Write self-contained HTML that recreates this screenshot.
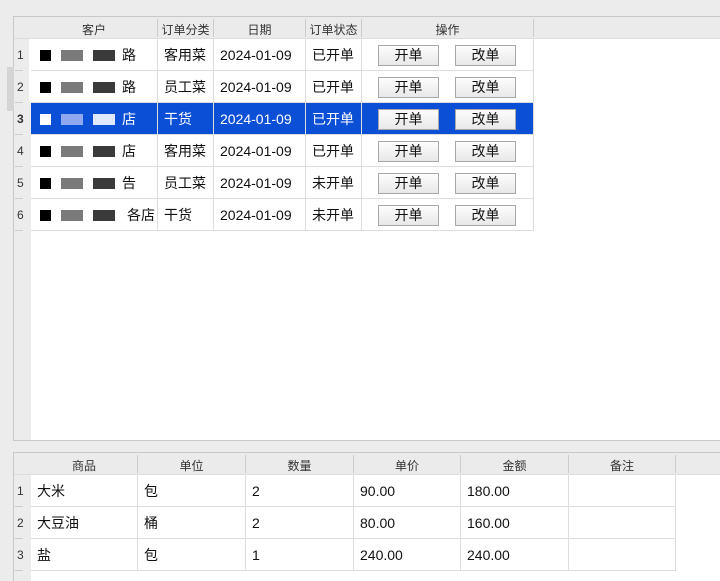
<!DOCTYPE html><html><head><meta charset="utf-8"><style>
*{margin:0;padding:0;box-sizing:border-box}
body{width:720px;height:581px;background:#ececec;position:relative;overflow:hidden;font-family:"Liberation Sans","Noto Sans CJK SC",sans-serif;color:#111}
.a{position:absolute}
.hd{position:absolute;font-size:12px;color:#333;text-align:center;line-height:22px;border-right:1px solid #ccc;height:18px;top:2px}
.c{position:absolute;font-size:14px;line-height:32px;height:32px;border-right:1px solid #ddd;border-bottom:1px solid #ddd;padding-left:6px;white-space:nowrap}
.btn{position:absolute;width:61px;height:21px;border:1px solid #a8a8a8;background:linear-gradient(#fdfdfd,#e8e8e8);font-size:14px;text-align:center;line-height:19px;color:#111}
.rn{position:absolute;left:17px;font-size:12px;color:#333;line-height:32px}
.sq{position:absolute;width:11px;height:11px}
</style></head><body>
<div class="a" style="left:13px;top:16px;width:707px;height:425px;border-top:1px solid #c8c8c8;border-left:1px solid #c8c8c8;border-bottom:1px solid #c8c8c8;background:#fff"></div>
<div class="a" style="left:14px;top:17px;width:706px;height:22px;background:#ebebeb;border-bottom:1px solid #ddd"></div>
<div class="a" style="left:14px;top:39px;width:17px;height:401px;background:#ececec"></div>
<div class="a" style="left:0;top:17px;width:720px;height:22px">
<div class="hd" style="left:31px;width:127px">客户</div>
<div class="hd" style="left:158px;width:56px">订单分类</div>
<div class="hd" style="left:214px;width:92px">日期</div>
<div class="hd" style="left:306px;width:56px">订单状态</div>
<div class="hd" style="left:362px;width:172px">操作</div>
</div>
<div class="a" style="left:7px;top:67px;width:7px;height:44px;background:#d4d4d4"></div>
<div id="rows"></div>
<div class="a" style="left:13px;top:452px;width:707px;height:129px;border-top:1px solid #c8c8c8;border-left:1px solid #c8c8c8;background:#fff"></div>
<div class="a" style="left:14px;top:453px;width:706px;height:22px;background:#ebebeb;border-bottom:1px solid #ddd"></div>
<div class="a" style="left:14px;top:475px;width:17px;height:106px;background:#ececec"></div>
<div class="a" style="left:0;top:453px;width:720px;height:22px">
<div class="hd" style="left:31px;width:107px">商品</div>
<div class="hd" style="left:138px;width:108px">单位</div>
<div class="hd" style="left:246px;width:108px">数量</div>
<div class="hd" style="left:354px;width:107px">单价</div>
<div class="hd" style="left:461px;width:108px">金额</div>
<div class="hd" style="left:569px;width:107px">备注</div>
</div>
<div id="rows2"></div>
<script>
var R=[["路","客用菜","已开单",91],["路","员工菜","已开单",91],["店","干货","已开单",91],["店","客用菜","已开单",91],["告","员工菜","未开单",91],["各店","干货","未开单",96]];
var h="";
R.forEach(function(r,i){var y=39+i*32,s=i==2,col=s?"#fff":"#111",bg=s?"background:#0b4fd6;":"";
h+='<div class="rn" style="top:'+y+'px;'+(s?'font-weight:bold':'')+'">'+(i+1)+'</div>';
h+='<div class="a" style="left:31px;top:'+y+'px;width:503px;height:32px;'+bg+'"></div>';
h+='<div class="a" style="left:15px;top:'+(y+31)+'px;width:8px;height:1px;background:#ccc"></div>';
h+='<div class="c" style="left:31px;top:'+y+'px;width:127px;color:'+col+';padding-left:'+r[3]+'px">'+r[0]+'</div>';
h+='<div class="c" style="left:158px;top:'+y+'px;width:56px;color:'+col+'">'+r[1]+'</div>';
h+='<div class="c" style="left:214px;top:'+y+'px;width:92px;color:'+col+'">2024-01-09</div>';
h+='<div class="c" style="left:306px;top:'+y+'px;width:56px;color:'+col+'">'+r[2]+'</div>';
h+='<div class="c" style="left:362px;top:'+y+'px;width:172px"></div>';
h+='<div class="btn" style="left:378px;top:'+(y+6)+'px">开单</div><div class="btn" style="left:455px;top:'+(y+6)+'px">改单</div>';
var c1=s?"#fff":"#000",c2=s?"#8fa8f0":"#7a7a7a",c3=s?"#e0e8fb":"#3a3a3a";
h+='<div class="sq" style="left:40px;top:'+(y+11)+'px;background:'+c1+'"></div>';
h+='<div class="sq" style="left:61px;top:'+(y+11)+'px;width:22px;background:'+c2+'"></div>';
h+='<div class="sq" style="left:93px;top:'+(y+11)+'px;width:22px;background:'+c3+'"></div>';
});
h+='<div class="a" style="left:29px;top:39px;width:2px;height:63px;background:#fff"></div>';
document.getElementById("rows").innerHTML=h;
var B=[["大米","包","2","90.00","180.00"],["大豆油","桶","2","80.00","160.00"],["盐","包","1","240.00","240.00"]];
var L=[31,138,246,354,461,569],W=[107,108,108,107,108,107];h="";
B.forEach(function(r,i){var y=475+i*32;h+='<div class="rn" style="top:'+y+'px">'+(i+1)+'</div>';
h+='<div class="a" style="left:15px;top:'+(y+31)+'px;width:8px;height:1px;background:#ccc"></div>';
for(var j=0;j<6;j++)h+='<div class="c" style="left:'+L[j]+'px;top:'+y+'px;width:'+W[j]+'px">'+(r[j]||"")+'</div>';});
document.getElementById("rows2").innerHTML=h;
</script>
</body></html>
